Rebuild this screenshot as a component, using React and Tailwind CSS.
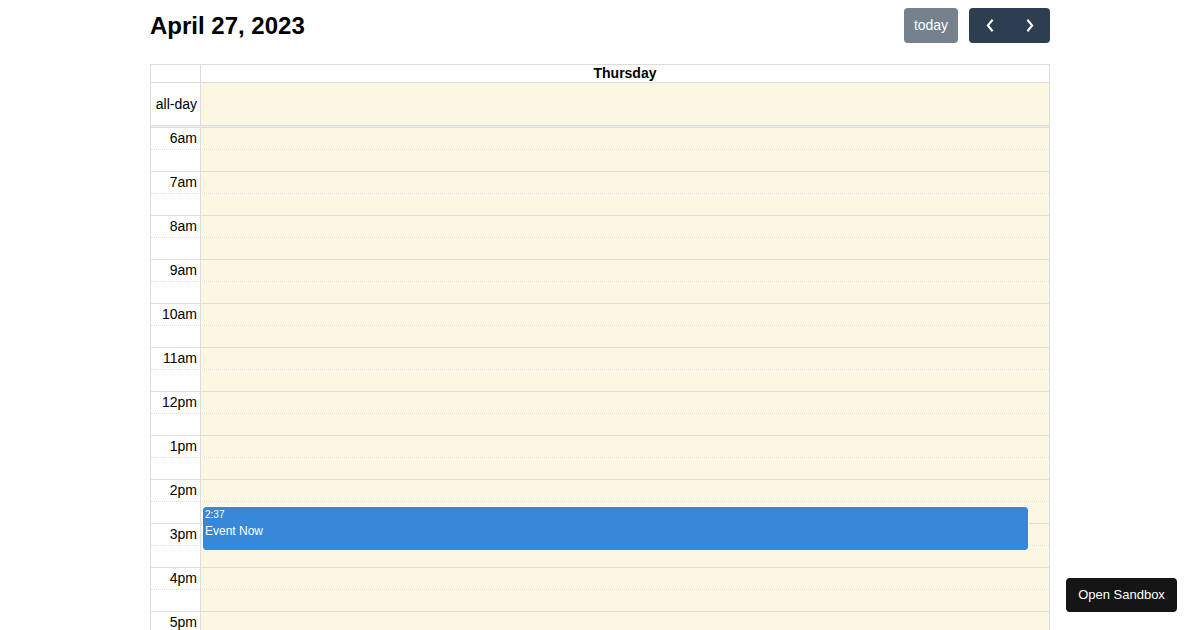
import React from 'react';

const HOURS = [6, 7, 8, 9, 10, 11, 12, 13, 14, 15, 16, 17, 18, 19, 20, 21, 22, 23];

function hourLabel(h) {
  if (h === 12) return '12pm';
  return h < 12 ? `${h}am` : `${h - 12}pm`;
}

function Chevron({ dir }) {
  return (
    <svg width="8" height="13" viewBox="0 0 8 13" fill="none">
      <path
        d={dir === 'left' ? 'M6 1.5 L1.8 6.5 L6 11.5' : 'M2 1.5 L6.2 6.5 L2 11.5'}
        stroke="white"
        strokeWidth="2"
        strokeLinecap="square"
      />
    </svg>
  );
}

function Toolbar() {
  return (
    <div className="flex items-center justify-between h-[35px] mb-[21px]">
      <h2 className="text-[24px] font-bold m-0">April 27, 2023</h2>
      <div className="flex items-center">
        <button className="h-[35px] w-[54px] rounded-[4px] bg-[#2c3e50] opacity-65 text-white text-[14px]">
          today
        </button>
        <div className="flex ml-[11px] rounded-[4px] overflow-hidden bg-[#2c3e50]">
          <button className="h-[35px] w-[41px] flex items-center justify-center">
            <Chevron dir="left" />
          </button>
          <button className="h-[35px] w-[40px] flex items-center justify-center">
            <Chevron dir="right" />
          </button>
        </div>
      </div>
    </div>
  );
}

function SlotRow({ label, minor }) {
  return (
    <div className={`flex h-[22px] border-t border-[#ddd] ${minor ? 'border-dotted' : 'border-solid'}`}>
      <div className="w-[50px] shrink-0 border-r border-[#ddd] text-right pr-[3px] text-[14px] leading-[21px]">
        {label}
      </div>
      <div className="flex-1 bg-[#fcf7e3]" />
    </div>
  );
}

export default function App() {
  return (
    <div className="h-[630px] overflow-hidden bg-white text-black font-['Liberation_Sans',Arial,sans-serif] text-[14px]">
      <div className="w-[900px] mx-auto pt-[8px]">
        <Toolbar />

        <div className="border-l border-r border-t border-[#ddd]">
          <div className="flex h-[18px] border-b border-[#ddd]">
            <div className="w-[50px] shrink-0 border-r border-[#ddd]" />
            <div className="flex-1 text-center font-bold leading-[16px]">Thursday</div>
          </div>

          <div className="flex h-[43px] border-b border-[#ddd]">
            <div className="w-[50px] shrink-0 border-r border-[#ddd] flex items-center justify-end pr-[3px]">
              all-day
            </div>
            <div className="flex-1 bg-[#fcf7e3]" />
          </div>

          <div className="h-px bg-[#eee]" />

          <div className="relative">
            {HOURS.map((h) => (
              <React.Fragment key={h}>
                <SlotRow label={hourLabel(h)} />
                <SlotRow minor />
              </React.Fragment>
            ))}

            <div className="absolute top-[380px] left-[52px] right-[21px] h-[43px] rounded-[3px] border border-[#3788d8] bg-[#3788d8] shadow-[0_0_0_1px_#fff] px-[1px] pt-[1px] text-white">
              <div className="text-[10px] leading-[11px]">2:37</div>
              <div className="text-[12px] leading-[14px] mt-[4px]">Event Now</div>
            </div>
          </div>
        </div>
      </div>

      <button className="fixed right-[23px] bottom-[18px] w-[111px] h-[34px] rounded-[4px] bg-[#151515] text-white text-[13px] flex items-center justify-center">
        Open Sandbox
      </button>
    </div>
  );
}
